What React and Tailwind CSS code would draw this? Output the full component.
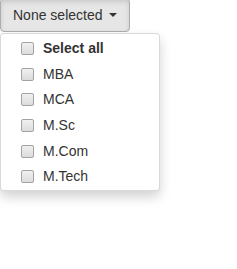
export default function App() {
  const items = ["MBA", "MCA", "M.Sc", "M.Com", "M.Tech"];
  const Box = () => (
    <span className="block w-[13px] h-[13px] shrink-0 rounded-[2px] border border-[#a3a3a3] bg-gradient-to-b from-[#f0f0f0] to-[#dcdcdc]" />
  );
  return (
    <div className="relative w-[237px] h-[269px] bg-white overflow-hidden" style={{ fontFamily: '"Liberation Sans", Arial, sans-serif' }}>
      <div className="absolute left-0 top-[50px] w-px h-[27px] bg-[#9a9a9a]" />
      <button className="mt-[-2px] flex items-center h-[34px] pl-[12px] pr-[12px] bg-[#e6e6e6] border border-[#adadad] rounded-[4px] shadow-[inset_0_3px_5px_rgba(0,0,0,0.125)] text-[14px] leading-[20px] text-[#333]">
        <span>None selected</span>
        <span className="ml-[6px] w-0 h-0 border-t-[4px] border-t-[#333] border-x-[4px] border-x-transparent" />
      </button>
      <div className="absolute left-0 top-[33px] w-[160px] pt-[2px] bg-white border border-[rgba(0,0,0,0.15)] rounded-[4px] shadow-[0_6px_12px_rgba(0,0,0,0.175)]">
        <div className="flex items-center h-[25.6px] pl-[20px] gap-[9px] text-[14px] text-[#333] font-bold">
          <Box />
          <span>Select all</span>
        </div>
        {items.map((t) => (
          <div key={t} className="flex items-center h-[25.6px] pl-[20px] gap-[9px] text-[14px] text-[#333]">
            <Box />
            <span>{t}</span>
          </div>
        ))}
      </div>
    </div>
  );
}
